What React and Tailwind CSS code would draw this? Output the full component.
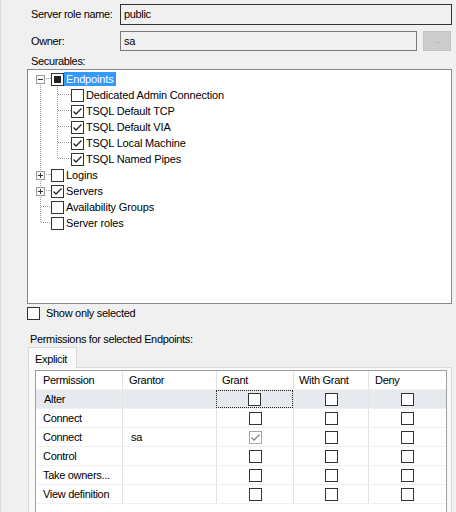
import React from "react";

const FONT = { fontFamily: '"Liberation Sans", Arial, sans-serif' };

function CheckBox({ state = "off", disabled = false }) {
    // state: off | on | mixed
    const border = disabled ? "border-[#a8a8a8]" : "border-[#333333]";
    return (
        <div className={`w-[13px] h-[13px] shrink-0 border ${border} bg-white flex items-center justify-center`}>
            {state === "on" && (
                <svg width="11" height="11" viewBox="0 0 11 11">
                    <polyline points="1.5,5.5 4,8 9.5,2.5" fill="none" stroke={disabled ? "#8a8a8a" : "#222222"} strokeWidth="1.3" />
                </svg>
            )}
            {state === "mixed" && <div className="w-[7px] h-[7px] bg-[#222222]" />}
        </div>
    );
}

function Expander({ open }) {
    return (
        <svg width="9" height="9" viewBox="0 0 9 9" className="shrink-0">
            <rect x="0.5" y="0.5" width="8" height="8" fill="#fdfdfd" stroke="#9a9a9a" />
            <line x1="2" y1="4.5" x2="7" y2="4.5" stroke="#333333" />
            {!open && <line x1="4.5" y1="2" x2="4.5" y2="7" stroke="#333333" />}
        </svg>
    );
}

const topNodes = [
    { label: "Endpoints", expander: "open", state: "mixed", selected: true },
    { label: "Logins", expander: "closed", state: "off" },
    { label: "Servers", expander: "closed", state: "on" },
    { label: "Availability Groups", expander: null, state: "off" },
    { label: "Server roles", expander: null, state: "off" },
];

const endpointChildren = [
    { label: "Dedicated Admin Connection", state: "off" },
    { label: "TSQL Default TCP", state: "on" },
    { label: "TSQL Default VIA", state: "on" },
    { label: "TSQL Local Machine", state: "on" },
    { label: "TSQL Named Pipes", state: "on" },
];

function TreeRow({ node }) {
    return (
        <div className="h-[16px] flex items-center pl-[8px]">
            {node.expander ? <Expander open={node.expander === "open"} /> : <div className="w-[9px] shrink-0" />}
            <div className="w-[6px] shrink-0" />
            <CheckBox state={node.state} />
            <span className={`px-[2px] h-[14px] leading-[14px] whitespace-nowrap ${node.selected ? "bg-[#3399ff] text-white" : ""}`}>
                {node.label}
            </span>
        </div>
    );
}

function ChildRow({ node }) {
    return (
        <div className="h-[16px] flex items-center pl-[43px]">
            <CheckBox state={node.state} />
            <span className="pl-[2px] h-[14px] leading-[14px] whitespace-nowrap">{node.label}</span>
        </div>
    );
}

const permissions = [
    { name: "Alter", grantor: "", grant: "off", focus: true },
    { name: "Connect", grantor: "", grant: "off" },
    { name: "Connect", grantor: "sa", grant: "on", disabled: true },
    { name: "Control", grantor: "", grant: "off" },
    { name: "Take owners...", grantor: "", grant: "off" },
    { name: "View definition", grantor: "", grant: "off" },
];

const cols = "grid grid-cols-[86px_94px_77px_75px_78px]";

export default function App() {
    return (
        <div className="w-[456px] h-[512px] overflow-hidden bg-[#f0f0f0] text-[11px] text-black border-l border-[#dadada]" style={FONT}>
            <div className="pl-[26px] pr-[4px] pt-[4px] tracking-[-0.35px]">
                <div className="flex items-center h-[21px]">
                    <div className="w-[93px] pl-[4px]">Server role name:</div>
                    <div className="flex-1 h-[21px] border border-[#333333] bg-[#f0f0f0] flex items-center px-[3px]">public</div>
                </div>
                <div className="flex items-center h-[20px] mt-[6px]">
                    <div className="w-[93px] pl-[4px]">Owner:</div>
                    <div className="w-[297px] h-[20px] border border-[#7a7a7a] bg-[#f0f0f0] flex items-center px-[3px]">sa</div>
                    <div className="ml-[6px] w-[28px] h-[20px] bg-[#cccccc] border border-[#c4c4c4] text-[#a6a6a6] text-[9px] flex items-center justify-center">...</div>
                </div>
                <div className="mt-[4px] h-[13px] leading-[13px] pl-[4px]">Securables:</div>
            </div>

            <div className="ml-[26px] mt-[1px] w-[425px] h-[235px] border border-[#828790] bg-white relative tracking-[-0.15px]">
                <svg className="absolute left-0 top-0" width="423" height="233">
                    <g stroke="#a0a0a0" strokeDasharray="1 1" shapeRendering="crispEdges">
                        <line x1="12.5" y1="13" x2="12.5" y2="153" />
                        <line x1="18" y1="8.5" x2="23" y2="8.5" />
                        <line x1="18" y1="104.5" x2="23" y2="104.5" />
                        <line x1="18" y1="120.5" x2="23" y2="120.5" />
                        <line x1="13" y1="136.5" x2="23" y2="136.5" />
                        <line x1="13" y1="152.5" x2="23" y2="152.5" />
                        <line x1="29.5" y1="15" x2="29.5" y2="89" />
                        <line x1="30" y1="24.5" x2="43" y2="24.5" />
                        <line x1="30" y1="40.5" x2="43" y2="40.5" />
                        <line x1="30" y1="56.5" x2="43" y2="56.5" />
                        <line x1="30" y1="72.5" x2="43" y2="72.5" />
                        <line x1="30" y1="88.5" x2="43" y2="88.5" />
                    </g>
                </svg>
                <div className="relative pt-[1px]">
                    <TreeRow node={topNodes[0]} />
                    {endpointChildren.map((child, index) => (
                        <ChildRow node={child} key={index} />
                    ))}
                    {topNodes.slice(1).map((node, index) => (
                        <TreeRow node={node} key={index} />
                    ))}
                </div>
            </div>

            <div className="ml-[26px] mt-[3px] h-[13px] flex items-center tracking-[-0.3px]">
                <CheckBox />
                <span className="ml-[6px]">Show only selected</span>
            </div>

            <div className="ml-[29px] mt-[13px] h-[13px] leading-[13px] tracking-[-0.35px]">Permissions for selected Endpoints:</div>

            <div className="ml-[27px] mt-[1px] w-[49px] h-[21px] bg-[#fafafa] border border-b-0 border-[#d9d9d9] pl-[6px] pt-[3px] tracking-[-0.35px] relative z-10">
                Explicit
            </div>
            <div className="ml-[27px] mt-[-1px] w-[424px] h-[160px] bg-[#f9f9f9] border border-[#d9d9d9] pt-[2px] pl-[6px] tracking-[-0.3px]">
                <div className="w-[412px] h-[160px] border border-[#a0a0a0] bg-white">
                    <div className={`${cols} h-[19px] border-b border-[#f0f0f0]`}>
                        <div className="pl-[7px] flex items-center">Permission</div>
                        <div className="pl-[6px] flex items-center border-l border-[#e3e3e3]">Grantor</div>
                        <div className="pl-[5px] flex items-center border-l border-[#e3e3e3]">Grant</div>
                        <div className="pl-[5px] flex items-center border-l border-[#e3e3e3]">With Grant</div>
                        <div className="pl-[6px] flex items-center border-l border-[#e3e3e3]">Deny</div>
                    </div>
                    {permissions.map((perm, index) => (
                        <div className={`${cols} h-[19px] border-b border-[#f0f0f0] ${perm.focus ? "bg-[#e6eaef]" : ""}`} key={index}>
                            <div className={`${perm.focus ? "pl-[8px]" : "pl-[7px]"} flex items-center whitespace-nowrap`}>{perm.name}</div>
                            <div className="pl-[8px] flex items-center border-l border-[#e3e3e3]">{perm.grantor}</div>
                            <div className={`flex items-center justify-center ${perm.focus ? "border border-dotted border-[#222222]" : "border-l border-[#e3e3e3]"}`}>
                                <CheckBox state={perm.grant} disabled={perm.disabled} />
                            </div>
                            <div className="flex items-center justify-center border-l border-[#e3e3e3]">
                                <CheckBox />
                            </div>
                            <div className="flex items-center justify-center border-l border-[#e3e3e3]">
                                <CheckBox />
                            </div>
                        </div>
                    ))}
                </div>
            </div>
        </div>
    );
}
